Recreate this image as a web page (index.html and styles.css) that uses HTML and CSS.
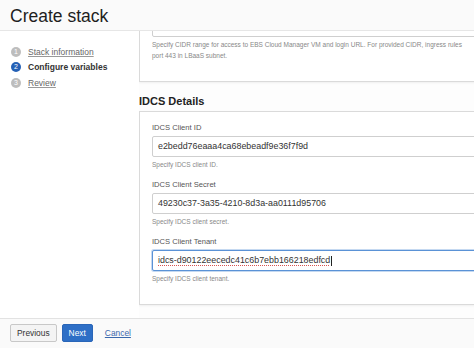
FILE: index.html
```
<!DOCTYPE html>
<html>
<head>
<meta charset="utf-8">
<link rel="stylesheet" href="styles.css">
</head>
<body>
<div class="page">
  <header class="header"><h1 class="title">Create stack</h1></header>
  <div class="body">
    <nav class="nav">
      <div class="step"><span class="num">1</span><a class="link">Stack information</a></div>
      <div class="step current"><span class="num">2</span><span class="cur">Configure variables</span></div>
      <div class="step"><span class="num">3</span><a class="link">Review</a></div>
    </nav>
    <main class="main">
      <div class="scroll">
        <section class="card first">
          <div class="input stub"></div>
          <div class="help two"><span class="nowrap">Specify CIDR range for access to EBS Cloud Manager VM and login URL. For provided CIDR, ingress rules</span><br>port 443 in LBaaS subnet.</div>
        </section>
        <h2 class="section-title">IDCS Details</h2>
        <section class="card">
          <div class="field">
            <div class="label">IDCS Client ID</div>
            <div class="input">e2bedd76eaaa4ca68ebeadf9e36f7f9d</div>
            <div class="help">Specify IDCS client ID.</div>
          </div>
          <div class="field">
            <div class="label">IDCS Client Secret</div>
            <div class="input">49230c37-3a35-4210-8d3a-aa0111d95706</div>
            <div class="help">Specify IDCS client secret.</div>
          </div>
          <div class="field">
            <div class="label">IDCS Client Tenant</div>
            <div class="input focus"><span class="spell">idcs-d90122eecedc41c6b7ebb166218edfcd</span><span class="caret"></span></div>
            <div class="help">Specify IDCS client tenant.</div>
          </div>
        </section>
      </div>
    </main>
  </div>
  <footer class="footer">
    <button class="btn">Previous</button>
    <button class="btn primary">Next</button>
    <a class="cancel">Cancel</a>
  </footer>
</div>
</body>
</html>
```
FILE: styles.css
```
* { box-sizing: border-box; }
html, body { margin: 0; padding: 0; }
body {
  font-family: "Liberation Sans", Arial, sans-serif;
  color: #333;
  background: #fff;
}
.page {
  width: 474px;
  height: 348px;
  overflow: hidden;
  display: flex;
  flex-direction: column;
}
.header {
  height: 31px;
  flex: none;
  background: #fafafa;
  border-bottom: 1px solid #e6e6e6;
  padding-left: 10px;
  display: flex;
  align-items: center;
  position: relative;
  z-index: 1;
}
.title {
  margin: 0;
  font-size: 17.5px;
  font-weight: normal;
  color: #1e1e1e;
  line-height: 20px;
  padding-top: 1px;
}
.body {
  flex: 1;
  display: flex;
  min-height: 0;
}
.nav {
  width: 139px;
  flex: none;
  padding-top: 13px;
  background: #fff;
}
.step {
  height: 15.5px;
  display: flex;
  align-items: center;
  padding-left: 11px;
  font-size: 8.5px;
}
.num {
  width: 10px;
  height: 10px;
  border-radius: 50%;
  background: #bdbdbd;
  color: #fff;
  font-size: 7px;
  line-height: 10px;
  text-align: center;
  margin-right: 7px;
  flex: none;
}
.current .num { background: #2460b5; }
.link {
  color: #666;
  text-decoration: underline;
  text-decoration-color: #999;
}
.cur { font-weight: bold; color: #333; }
.main {
  flex: 1;
  min-width: 0;
  overflow: hidden;
  background: #fdfdfd;
}
.scroll { width: 400px; }
.card {
  background: #fff;
  border: 1px solid #dadada;
  box-shadow: 0 1px 2px rgba(0,0,0,0.06);
  padding: 11px 12px 20px 12px;
}
.card.first { margin-top: -27px; }
.section-title {
  margin: 12px 0 3px 0;
  font-size: 11px;
  line-height: 14px;
  font-weight: bold;
  color: #222;
}
.field + .field { margin-top: 10px; }
.label {
  font-size: 7.6px;
  line-height: 10px;
  color: #555;
}
.input {
  margin-top: 3px;
  height: 21px;
  border: 1px solid #cfcfcf;
  border-radius: 2px;
  background: #fff;
  padding: 0 5px;
  font-size: 8.9px;
  line-height: 19px;
  color: #333;
  white-space: nowrap;
  display: flex;
  align-items: center;
}
.input.stub { margin-top: 0; }
.input.focus {
  border-color: #5a92d6;
  box-shadow: 0 0 0 1px rgba(90,146,214,0.35);
}
.spell {
  text-decoration: underline dotted #d9534f;
  text-underline-offset: 1.5px;
  text-decoration-thickness: 1px;
}
.caret {
  display: inline-block;
  width: 1px;
  height: 10px;
  background: #222;
  margin-left: 1px;
}
.help {
  margin-top: 3px;
  font-size: 6.5px;
  line-height: 10px;
  color: #888;
}
.help.two { line-height: 10.5px; }
.nowrap { white-space: nowrap; }
.footer {
  height: 30px;
  flex: none;
  border-top: 1px solid #e2e2e2;
  background: #fafafa;
  display: flex;
  align-items: center;
  padding: 0 0 1px 10px;
}
.btn {
  height: 18px;
  font-family: inherit;
  font-size: 8.4px;
  padding: 0 6px;
  border: 1px solid #c8c8c8;
  border-radius: 2px;
  background: #f4f4f4;
  color: #333;
  margin: 0 5px 0 0;
  line-height: 16px;
}
.btn.primary {
  background: #2e6fc6;
  border-color: #2a66b8;
  color: #fff;
  margin-right: 12px;
}
.cancel {
  font-size: 8.4px;
  color: #3b68ad;
  text-decoration: underline;
}
```
